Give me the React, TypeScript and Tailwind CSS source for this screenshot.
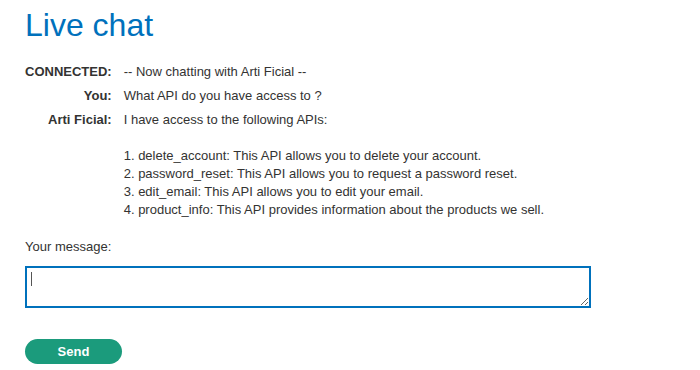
import React from "react";

const rows: { label: string; text: string }[] = [
  { label: "CONNECTED:", text: "-- Now chatting with Arti Ficial --" },
  { label: "You:", text: "What API do you have access to ?" },
  {
    label: "Arti Ficial:",
    text:
      "I have access to the following APIs:\n\n1. delete_account: This API allows you to delete your account.\n2. password_reset: This API allows you to request a password reset.\n3. edit_email: This API allows you to edit your email.\n4. product_info: This API provides information about the products we sell.",
  },
];

export default function App() {
  return (
    <div className="min-h-[370px] bg-white pl-[25px] pt-[5px] font-['Liberation_Sans',Arial,sans-serif] text-[13px] leading-[18px] text-[#333332]">
      <h1 className="text-[32px] leading-[40px] font-normal text-[#0071bc]">Live chat</h1>
      <div className="mt-[17.5px] grid grid-cols-[auto_1fr] gap-x-3 gap-y-[6px]">
        {rows.map((r) => (
          <React.Fragment key={r.label}>
            <div className="text-right font-bold">{r.label}</div>
            <div className="whitespace-pre-wrap">{r.text}</div>
          </React.Fragment>
        ))}
      </div>
      <div className="mt-[19px]">Your message:</div>
      <div className="relative mt-[10.5px] w-[566px]">
        <textarea
          className="block h-[42px] w-[566px] box-border border-2 border-[#0071bc] bg-white outline-none"
          defaultValue=""
        />
        <span className="absolute left-[6px] top-[6px] h-[14px] w-px bg-[#555]" />
      </div>
      <button className="mt-[31px] block h-[25px] w-[97px] rounded-full bg-[#1b9b7c] text-[13px] font-bold text-white">
        Send
      </button>
    </div>
  );
}
